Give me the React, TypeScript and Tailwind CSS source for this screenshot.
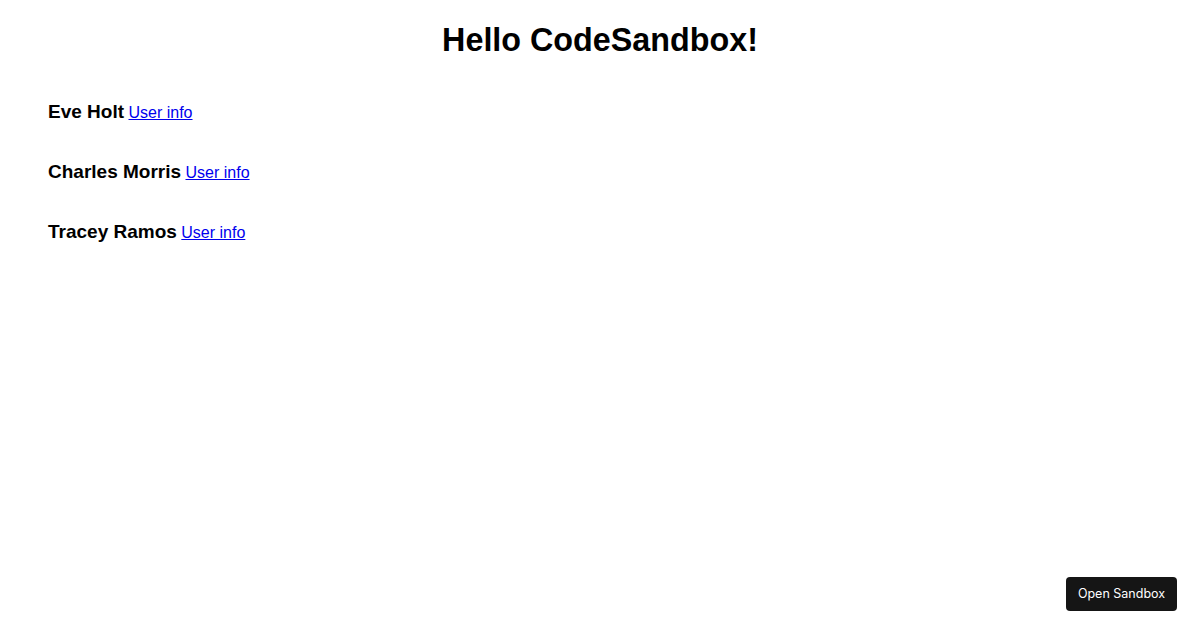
import React from "react";

const users = ["Eve Holt", "Charles Morris", "Tracey Ramos"];

export default function App() {
  return (
    <div className="min-h-[630px] bg-white text-black" style={{ fontFamily: '"Liberation Sans", Arial, sans-serif' }}>
      <h1 className="pt-[22px] text-center text-[32.3px] leading-[37px] font-bold">Hello CodeSandbox!</h1>
      <div className="mt-[41.5px] flex flex-col gap-[38px] pl-[48px]">
        {users.map((u) => (
          <div key={u} className="h-[22px] text-[16px] leading-[22px]">
            <h3 className="inline text-[19px] leading-[22px] font-bold">{u}</h3>{" "}
            <a href="#" className="text-[#0000ee] underline">User info</a>
          </div>
        ))}
      </div>
      <button
        className="fixed right-[23px] bottom-[19px] flex h-[34px] w-[111px] items-center justify-center rounded-[4px] bg-[#151515] pt-[1px] text-[12.5px] text-white"
        style={{ fontFamily: 'Inter, "Liberation Sans", sans-serif' }}
      >
        Open Sandbox
      </button>
    </div>
  );
}
